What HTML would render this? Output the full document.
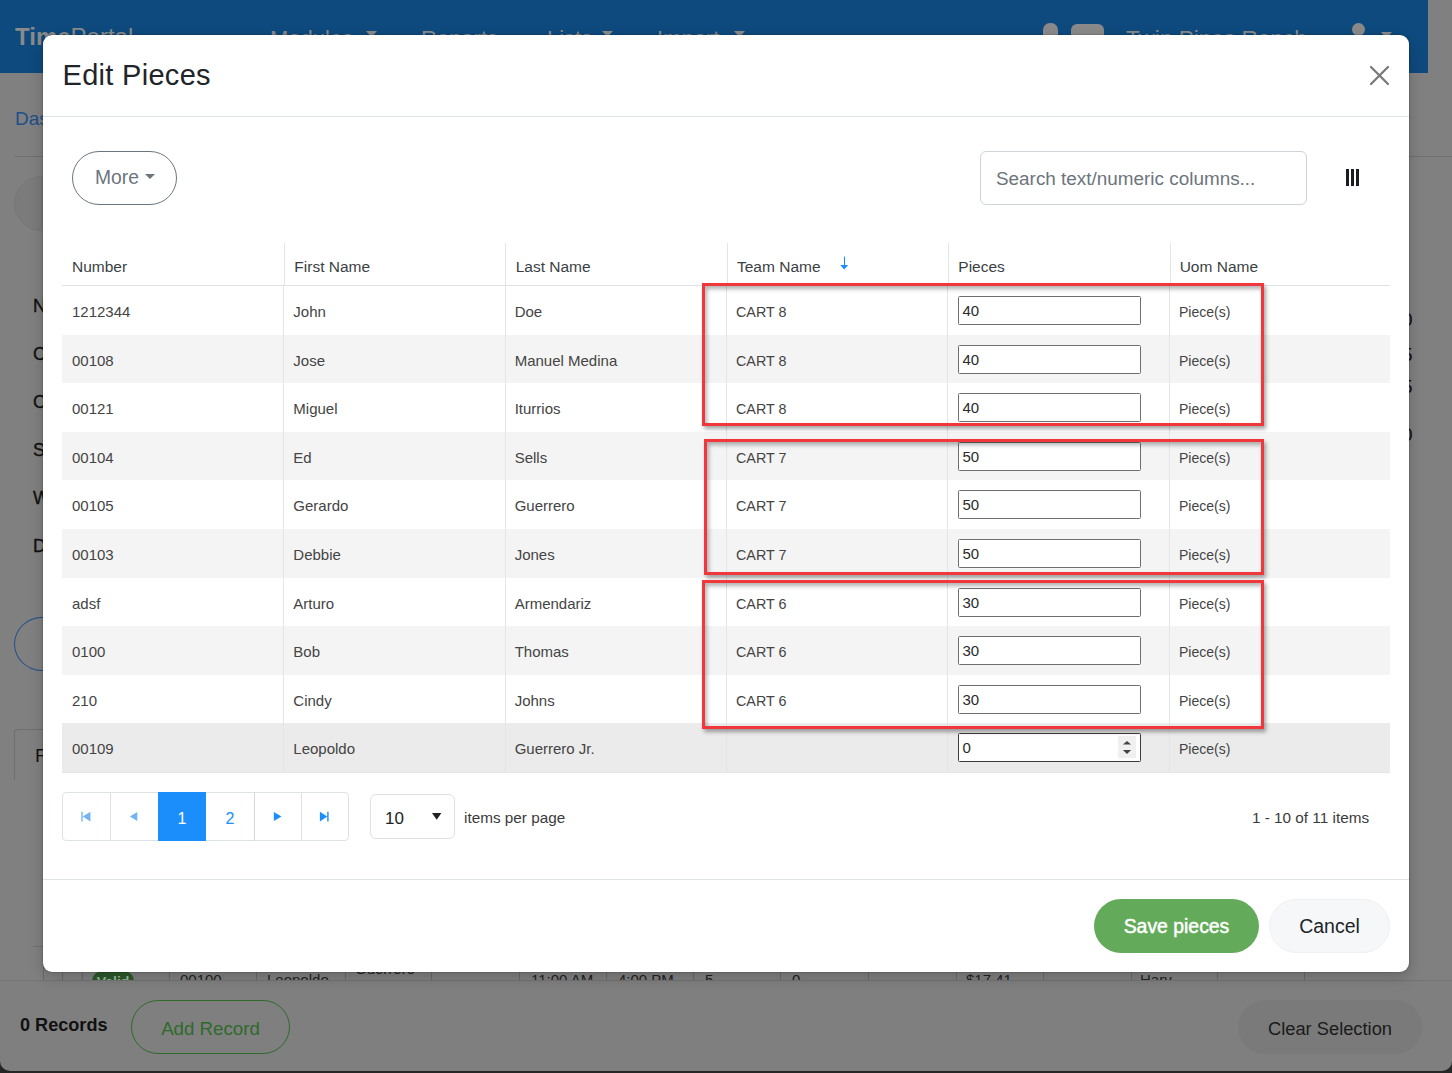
<!DOCTYPE html>
<html><head><meta charset="utf-8">
<style>
*{box-sizing:border-box;margin:0;padding:0}
html,body{width:1452px;height:1073px;overflow:hidden;background:#808080;font-family:"Liberation Sans",sans-serif;position:relative}
.abs{position:absolute}
#nav{left:0;top:0;width:1428px;height:73px;background:#0e4a7e}
.navt{color:#8a8a8a;font-size:22px;white-space:nowrap}
#bbar{left:0;top:980px;width:1452px;height:91px;background:#7f7f7f;border-top:1px solid #737373;border-radius:0 0 10px 10px}
#modal{left:43px;top:35px;width:1366px;height:937px;background:#fff;border-radius:9px;box-shadow:0 0 1.5px rgba(0,0,0,.55), 0 5px 15px rgba(0,0,0,.2)}
.rb{position:absolute;left:62px;width:1328px}
.vl{position:absolute;width:1px;background:#e3e5e8}
.th{position:absolute;top:255.5px;font-size:15.5px;color:#3b3f44;white-space:nowrap;line-height:22px}
.td{position:absolute;font-size:15px;color:#444;white-space:nowrap}
.inp{position:absolute;left:958px;width:183px;height:29px;border:1px solid #6e6e6e;border-radius:1.5px;background:#fff;font-size:15px;color:#2a2a2a;padding-left:3.5px;line-height:27.5px}
.spin{position:absolute;right:4px;top:2px;width:18px;height:22px;background:#f0f0f0}
.red{position:absolute;border:3px solid #f0373c;box-shadow:2px 3px 4px rgba(0,0,0,.35), inset 2px 3px 4px rgba(0,0,0,.3)}
.pg{position:absolute;top:792px;height:48px;border:1px solid #dee2e6}
</style></head><body>
<div id="nav" class="abs"></div>
<div class="abs navt" style="left:15px;top:25px;font-size:24px;line-height:24px;font-weight:bold">Time<span style="font-weight:normal">Portal</span></div>
<div class="abs navt" style="left:270px;top:26px">Modules</div>
<svg class="abs" style="left:365px;top:30px" width="13" height="8" viewBox="0 0 13 8"><path d="M1 1H12L6.5 7Z" fill="#8a8a8a"/></svg>
<div class="abs navt" style="left:421px;top:26px">Reports</div>
<div class="abs navt" style="left:547px;top:26px">Lists</div>
<svg class="abs" style="left:601px;top:30px" width="13" height="8" viewBox="0 0 13 8"><path d="M1 1H12L6.5 7Z" fill="#8a8a8a"/></svg>
<div class="abs navt" style="left:657px;top:26px">Import</div>
<svg class="abs" style="left:733px;top:30px" width="13" height="8" viewBox="0 0 13 8"><path d="M1 1H12L6.5 7Z" fill="#8a8a8a"/></svg>
<div class="abs" style="left:1043px;top:23px;width:15px;height:20px;border-radius:7px 7px 2px 2px;background:#8a8a8a"></div>
<div class="abs" style="left:1071px;top:24px;width:33px;height:20px;border-radius:6px;background:#8a8a8a"></div>
<div class="abs navt" style="left:1126px;top:26px;font-size:22.6px">Twin Pines Ranch</div>
<div class="abs" style="left:1352px;top:23px;width:13px;height:13px;border-radius:50%;background:#8a8a8a"></div>
<div class="abs" style="left:1348px;top:37px;width:21px;height:12px;border-radius:10px 10px 0 0;background:#8a8a8a"></div>
<svg class="abs" style="left:1380px;top:31px" width="13" height="8" viewBox="0 0 13 8"><path d="M1 1H12L6.5 7Z" fill="#8a8a8a"/></svg>
<div class="abs" style="left:15px;top:109px;font-size:19px;line-height:19px;color:#1d4f8a">Dashboard</div>
<div class="abs" style="left:14px;top:156px;width:60px;height:1px;background:#707070"></div>
<div class="abs" style="left:14px;top:176px;width:60px;height:55px;border-radius:28px;border:1px solid #777;background:#7b7b7b"></div>
<div class="abs" style="left:33px;top:297px;font-size:18px;line-height:18px;color:#111;-webkit-text-stroke:0.35px #111;white-space:nowrap">Name</div>
<div class="abs" style="left:33px;top:345px;font-size:18px;line-height:18px;color:#111;-webkit-text-stroke:0.35px #111">Code</div>
<div class="abs" style="left:33px;top:393px;font-size:18px;line-height:18px;color:#111;-webkit-text-stroke:0.35px #111">Crew</div>
<div class="abs" style="left:33px;top:441px;font-size:18px;line-height:18px;color:#111;-webkit-text-stroke:0.35px #111">Start</div>
<div class="abs" style="left:33px;top:489px;font-size:18px;line-height:18px;color:#111;-webkit-text-stroke:0.35px #111">Work</div>
<div class="abs" style="left:33px;top:537px;font-size:18px;line-height:18px;color:#111;-webkit-text-stroke:0.35px #111">Date</div>
<div class="abs" style="left:14px;top:617px;width:56px;height:54px;border-radius:50%;border:1px solid #1d4f8a"></div>
<div class="abs" style="left:14px;top:729px;width:100px;height:51px;border-radius:4px 4px 0 0;border:1px solid #6f6f6f;border-bottom:none"></div>
<div class="abs" style="left:35px;top:746px;font-size:19px;line-height:19px;color:#111">Rows</div>
<div class="abs" style="left:33px;top:946px;width:30px;height:1px;background:#707070"></div>
<div class="abs" style="left:1402px;top:310px;font-size:19px;line-height:19px;color:#111">0</div>
<div class="abs" style="left:1402px;top:345px;font-size:19px;line-height:19px;color:#111">5</div>
<div class="abs" style="left:1402px;top:377px;font-size:19px;line-height:19px;color:#111">5</div>
<div class="abs" style="left:1402px;top:425px;font-size:19px;line-height:19px;color:#111">0</div>
<div class="abs" style="left:1409px;top:156px;width:43px;height:1px;background:#707070"></div>

<div class="abs" style="left:43px;top:966px;width:1px;height:14px;background:#6a6a6a"></div>
<div class="abs" style="left:62px;top:966px;width:1px;height:14px;background:#6a6a6a"></div>
<div class="abs" style="left:82px;top:966px;width:1px;height:14px;background:#6a6a6a"></div>
<div class="abs" style="left:169px;top:966px;width:1px;height:14px;background:#6a6a6a"></div>
<div class="abs" style="left:256px;top:966px;width:1px;height:14px;background:#6a6a6a"></div>
<div class="abs" style="left:345px;top:966px;width:1px;height:14px;background:#6a6a6a"></div>
<div class="abs" style="left:431px;top:966px;width:1px;height:14px;background:#6a6a6a"></div>
<div class="abs" style="left:519px;top:966px;width:1px;height:14px;background:#6a6a6a"></div>
<div class="abs" style="left:606px;top:966px;width:1px;height:14px;background:#6a6a6a"></div>
<div class="abs" style="left:693px;top:966px;width:1px;height:14px;background:#6a6a6a"></div>
<div class="abs" style="left:780px;top:966px;width:1px;height:14px;background:#6a6a6a"></div>
<div class="abs" style="left:868px;top:966px;width:1px;height:14px;background:#6a6a6a"></div>
<div class="abs" style="left:956px;top:966px;width:1px;height:14px;background:#6a6a6a"></div>
<div class="abs" style="left:1043px;top:966px;width:1px;height:14px;background:#6a6a6a"></div>
<div class="abs" style="left:1131px;top:966px;width:1px;height:14px;background:#6a6a6a"></div>
<div class="abs" style="left:1217px;top:966px;width:1px;height:14px;background:#6a6a6a"></div>
<div class="abs" style="left:1304px;top:966px;width:1px;height:14px;background:#6a6a6a"></div>
<div class="abs" style="left:92px;top:971px;width:42px;height:20px;border-radius:10px;background:#2d5a2b;color:#9fb89e;font-size:14px;font-weight:bold;line-height:23px;text-align:center">Valid</div>
<div class="abs" style="left:180px;top:972px;font-size:15px;line-height:15px;color:#222;white-space:nowrap">00100</div>
<div class="abs" style="left:267px;top:972px;font-size:15px;line-height:15px;color:#222;white-space:nowrap">Leopoldo</div>
<div class="abs" style="left:355px;top:961px;font-size:15px;line-height:15px;color:#222;white-space:nowrap">Guerrero</div>
<div class="abs" style="left:531px;top:972px;font-size:15px;line-height:15px;color:#222;white-space:nowrap">11:00 AM</div>
<div class="abs" style="left:618px;top:972px;font-size:15px;line-height:15px;color:#222;white-space:nowrap">4:00 PM</div>
<div class="abs" style="left:705px;top:972px;font-size:15px;line-height:15px;color:#222;white-space:nowrap">5</div>
<div class="abs" style="left:792px;top:972px;font-size:15px;line-height:15px;color:#222;white-space:nowrap">0</div>
<div class="abs" style="left:966px;top:972px;font-size:15px;line-height:15px;color:#222;white-space:nowrap">$17.41</div>
<div class="abs" style="left:1140px;top:972px;font-size:15px;line-height:15px;color:#222;white-space:nowrap">Hary</div>

<div class="abs" style="left:0;top:1050px;width:1452px;height:23px;background:#262626"></div>
<div id="bbar" class="abs"></div>

<div class="abs" style="left:20px;top:1015.5px;font-size:18.1px;line-height:18px;font-weight:bold;color:#111">0 Records</div>
<div class="abs" style="left:131px;top:1000px;width:159px;height:54px;border:1px solid #2f6a2c;border-radius:27px;color:#2f6a2c;font-size:18.7px;text-align:center;line-height:55px">Add Record</div>
<div class="abs" style="left:1238px;top:1000px;width:184px;height:54px;border-radius:27px;background:#7a7a7a;color:#1a1a1a;font-size:18.3px;text-align:center;line-height:57px">Clear Selection</div>

<div id="modal" class="abs"></div>
<div class="abs" style="left:62.5px;top:58px;font-size:29px;letter-spacing:0.3px;color:#212529;white-space:nowrap;line-height:34px">Edit Pieces</div>
<svg class="abs" style="left:1368px;top:64px" width="24" height="24" viewBox="0 0 24 24"><path d="M3 3L20 20M20 3L3 20" stroke="#777" stroke-width="2.2" stroke-linecap="round"/></svg>
<div class="abs" style="left:43px;top:116px;width:1366px;height:1px;background:#dee2e6"></div>
<div class="abs" style="left:72px;top:151px;width:105px;height:54px;border:1px solid #6c757d;border-radius:27px;color:#6c757d;font-size:19.3px;line-height:52px;padding-left:22px">More<span style="display:inline-block;margin-left:6.5px;vertical-align:middle;width:0;height:0;border-left:5px solid transparent;border-right:5px solid transparent;border-top:5px solid #6c757d;position:relative;top:-2px"></span></div>
<div class="abs" style="left:980px;top:151px;width:327px;height:54px;border:1px solid #ced4da;border-radius:6px;color:#6c757d;font-size:18.9px;line-height:54px;padding-left:15px;white-space:nowrap">Search text/numeric columns...</div>
<div class="abs" style="left:1346px;top:169px;width:3px;height:17px;background:#1a1d21"></div>
<div class="abs" style="left:1351px;top:169px;width:3px;height:17px;background:#1a1d21"></div>
<div class="abs" style="left:1356px;top:169px;width:3px;height:17px;background:#1a1d21"></div>

<div class="rb" style="top:286.00px;height:48.60px;background:#fff"></div>
<div class="rb" style="top:334.60px;height:48.60px;background:#f4f4f4"></div>
<div class="rb" style="top:383.20px;height:48.60px;background:#fff"></div>
<div class="rb" style="top:431.80px;height:48.60px;background:#f4f4f4"></div>
<div class="rb" style="top:480.40px;height:48.60px;background:#fff"></div>
<div class="rb" style="top:529.00px;height:48.60px;background:#f4f4f4"></div>
<div class="rb" style="top:577.60px;height:48.60px;background:#fff"></div>
<div class="rb" style="top:626.20px;height:48.60px;background:#f4f4f4"></div>
<div class="rb" style="top:674.80px;height:48.60px;background:#fff"></div>
<div class="rb" style="top:723.40px;height:48.60px;background:#ebebeb"></div>
<div class="abs" style="left:62px;top:772.00px;width:1328px;height:1px;background:#e3e5e8"></div>
<div class="vl" style="left:283px;top:286.0px;height:486.00px"></div>
<div class="vl" style="left:505px;top:286.0px;height:486.00px"></div>
<div class="vl" style="left:726px;top:286.0px;height:486.00px"></div>
<div class="vl" style="left:947px;top:286.0px;height:486.00px"></div>
<div class="vl" style="left:1169px;top:286.0px;height:486.00px"></div>
<div class="vl" style="left:284px;top:243px;height:42px"></div>
<div class="vl" style="left:505px;top:243px;height:42px"></div>
<div class="vl" style="left:727px;top:243px;height:42px"></div>
<div class="vl" style="left:948px;top:243px;height:42px"></div>
<div class="vl" style="left:1170px;top:243px;height:42px"></div>
<div class="abs" style="left:62px;top:285px;width:1328px;height:1px;background:#dfe3e8"></div>
<div class="th" style="left:72.00px">Number</div>
<div class="th" style="left:294.33px">First Name</div>
<div class="th" style="left:515.67px">Last Name</div>
<div class="th" style="left:737.00px">Team Name</div>
<div class="th" style="left:958.33px">Pieces</div>
<div class="th" style="left:1179.67px">Uom Name</div>
<svg class="abs" style="left:838px;top:254px" width="12" height="18" viewBox="0 0 12 18"><path d="M6.5 2.6V11.5" stroke="#1a8cff" stroke-width="1.1"/><path d="M2.3 11.1H10.2L6.2 15.4Z" fill="#1a8cff"/></svg>
<div class="td" style="left:72.00px;top:288.00px;height:48.60px;line-height:48.60px">1212344</div>
<div class="td" style="left:293.33px;top:288.00px;height:48.60px;line-height:48.60px">John</div>
<div class="td" style="left:514.67px;top:288.00px;height:48.60px;line-height:48.60px">Doe</div>
<div class="td" style="left:736.00px;top:288.00px;height:48.60px;line-height:48.60px;transform:scaleX(0.955);transform-origin:0 0">CART 8</div>
<div class="td" style="left:1178.67px;top:288.00px;height:48.60px;line-height:48.60px;transform:scaleX(0.935);transform-origin:0 0">Piece(s)</div>
<div class="inp" style="top:296.00px">40</div>
<div class="td" style="left:72.00px;top:336.60px;height:48.60px;line-height:48.60px">00108</div>
<div class="td" style="left:293.33px;top:336.60px;height:48.60px;line-height:48.60px">Jose</div>
<div class="td" style="left:514.67px;top:336.60px;height:48.60px;line-height:48.60px">Manuel Medina</div>
<div class="td" style="left:736.00px;top:336.60px;height:48.60px;line-height:48.60px;transform:scaleX(0.955);transform-origin:0 0">CART 8</div>
<div class="td" style="left:1178.67px;top:336.60px;height:48.60px;line-height:48.60px;transform:scaleX(0.935);transform-origin:0 0">Piece(s)</div>
<div class="inp" style="top:344.60px">40</div>
<div class="td" style="left:72.00px;top:385.20px;height:48.60px;line-height:48.60px">00121</div>
<div class="td" style="left:293.33px;top:385.20px;height:48.60px;line-height:48.60px">Miguel</div>
<div class="td" style="left:514.67px;top:385.20px;height:48.60px;line-height:48.60px">Iturrios</div>
<div class="td" style="left:736.00px;top:385.20px;height:48.60px;line-height:48.60px;transform:scaleX(0.955);transform-origin:0 0">CART 8</div>
<div class="td" style="left:1178.67px;top:385.20px;height:48.60px;line-height:48.60px;transform:scaleX(0.935);transform-origin:0 0">Piece(s)</div>
<div class="inp" style="top:393.20px">40</div>
<div class="td" style="left:72.00px;top:433.80px;height:48.60px;line-height:48.60px">00104</div>
<div class="td" style="left:293.33px;top:433.80px;height:48.60px;line-height:48.60px">Ed</div>
<div class="td" style="left:514.67px;top:433.80px;height:48.60px;line-height:48.60px">Sells</div>
<div class="td" style="left:736.00px;top:433.80px;height:48.60px;line-height:48.60px;transform:scaleX(0.955);transform-origin:0 0">CART 7</div>
<div class="td" style="left:1178.67px;top:433.80px;height:48.60px;line-height:48.60px;transform:scaleX(0.935);transform-origin:0 0">Piece(s)</div>
<div class="inp" style="top:441.80px">50</div>
<div class="td" style="left:72.00px;top:482.40px;height:48.60px;line-height:48.60px">00105</div>
<div class="td" style="left:293.33px;top:482.40px;height:48.60px;line-height:48.60px">Gerardo</div>
<div class="td" style="left:514.67px;top:482.40px;height:48.60px;line-height:48.60px">Guerrero</div>
<div class="td" style="left:736.00px;top:482.40px;height:48.60px;line-height:48.60px;transform:scaleX(0.955);transform-origin:0 0">CART 7</div>
<div class="td" style="left:1178.67px;top:482.40px;height:48.60px;line-height:48.60px;transform:scaleX(0.935);transform-origin:0 0">Piece(s)</div>
<div class="inp" style="top:490.40px">50</div>
<div class="td" style="left:72.00px;top:531.00px;height:48.60px;line-height:48.60px">00103</div>
<div class="td" style="left:293.33px;top:531.00px;height:48.60px;line-height:48.60px">Debbie</div>
<div class="td" style="left:514.67px;top:531.00px;height:48.60px;line-height:48.60px">Jones</div>
<div class="td" style="left:736.00px;top:531.00px;height:48.60px;line-height:48.60px;transform:scaleX(0.955);transform-origin:0 0">CART 7</div>
<div class="td" style="left:1178.67px;top:531.00px;height:48.60px;line-height:48.60px;transform:scaleX(0.935);transform-origin:0 0">Piece(s)</div>
<div class="inp" style="top:539.00px">50</div>
<div class="td" style="left:72.00px;top:579.60px;height:48.60px;line-height:48.60px">adsf</div>
<div class="td" style="left:293.33px;top:579.60px;height:48.60px;line-height:48.60px">Arturo</div>
<div class="td" style="left:514.67px;top:579.60px;height:48.60px;line-height:48.60px">Armendariz</div>
<div class="td" style="left:736.00px;top:579.60px;height:48.60px;line-height:48.60px;transform:scaleX(0.955);transform-origin:0 0">CART 6</div>
<div class="td" style="left:1178.67px;top:579.60px;height:48.60px;line-height:48.60px;transform:scaleX(0.935);transform-origin:0 0">Piece(s)</div>
<div class="inp" style="top:587.60px">30</div>
<div class="td" style="left:72.00px;top:628.20px;height:48.60px;line-height:48.60px">0100</div>
<div class="td" style="left:293.33px;top:628.20px;height:48.60px;line-height:48.60px">Bob</div>
<div class="td" style="left:514.67px;top:628.20px;height:48.60px;line-height:48.60px">Thomas</div>
<div class="td" style="left:736.00px;top:628.20px;height:48.60px;line-height:48.60px;transform:scaleX(0.955);transform-origin:0 0">CART 6</div>
<div class="td" style="left:1178.67px;top:628.20px;height:48.60px;line-height:48.60px;transform:scaleX(0.935);transform-origin:0 0">Piece(s)</div>
<div class="inp" style="top:636.20px">30</div>
<div class="td" style="left:72.00px;top:676.80px;height:48.60px;line-height:48.60px">210</div>
<div class="td" style="left:293.33px;top:676.80px;height:48.60px;line-height:48.60px">Cindy</div>
<div class="td" style="left:514.67px;top:676.80px;height:48.60px;line-height:48.60px">Johns</div>
<div class="td" style="left:736.00px;top:676.80px;height:48.60px;line-height:48.60px;transform:scaleX(0.955);transform-origin:0 0">CART 6</div>
<div class="td" style="left:1178.67px;top:676.80px;height:48.60px;line-height:48.60px;transform:scaleX(0.935);transform-origin:0 0">Piece(s)</div>
<div class="inp" style="top:684.80px">30</div>
<div class="td" style="left:72.00px;top:725.40px;height:48.60px;line-height:48.60px">00109</div>
<div class="td" style="left:293.33px;top:725.40px;height:48.60px;line-height:48.60px">Leopoldo</div>
<div class="td" style="left:514.67px;top:725.40px;height:48.60px;line-height:48.60px">Guerrero Jr.</div>
<div class="td" style="left:1178.67px;top:725.40px;height:48.60px;line-height:48.60px;transform:scaleX(0.935);transform-origin:0 0">Piece(s)</div>
<div class="inp" style="top:733.40px;border-color:#3c3c3c">0<div class="spin"><svg width="18" height="22" viewBox="0 0 18 22"><path d="M4.9 8.5L9 5 13.1 8.5Z M4.9 14H13.1L9 18.1Z" fill="#444"/></svg></div></div>

<div class="red" style="left:702px;top:283px;width:562px;height:143px"></div>
<div class="red" style="left:704px;top:439px;width:560px;height:135.5px"></div>
<div class="red" style="left:702px;top:580px;width:562px;height:148.5px"></div>

<div class="abs" style="left:62px;top:792px;width:287px;height:49px;border:1px solid #dee2e6;border-radius:4px"></div>
<div class="abs" style="left:110px;top:792px;width:1px;height:49px;background:#dee2e6"></div>
<div class="abs" style="left:158px;top:792px;width:48px;height:49px;background:#1c8efc"></div>
<div class="abs" style="left:254px;top:792px;width:1px;height:49px;background:#d6dadf"></div>
<div class="abs" style="left:301px;top:792px;width:1px;height:49px;background:#dee2e6"></div>
<svg class="abs" style="left:80px;top:810px" width="14" height="14" viewBox="0 0 14 14"><path d="M1.3 1.8H2.7V11.5H1.3Z M2.7 6.6L10.4 1.8V11.5Z" fill="#73b4f4"/></svg>
<svg class="abs" style="left:128px;top:810px" width="14" height="14" viewBox="0 0 14 14"><path d="M1.8 6.6L9.3 2V11Z" fill="#73b4f4"/></svg>
<div class="abs" style="left:158px;top:808px;width:48px;text-align:center;font-size:16px;color:#fff;line-height:22px">1</div>
<div class="abs" style="left:206px;top:808px;width:48px;text-align:center;font-size:16px;color:#1c8efc;line-height:22px">2</div>
<svg class="abs" style="left:272px;top:810px" width="14" height="14" viewBox="0 0 14 14"><path d="M1.8 2V11L9.5 6.6Z" fill="#1c8efc"/></svg>
<svg class="abs" style="left:318px;top:810px" width="14" height="14" viewBox="0 0 14 14"><path d="M1.9 1.8V11.5L9.2 6.6Z M9.2 1.8H10.6V11.5H9.2Z" fill="#1c8efc"/></svg>

<div class="abs" style="left:370px;top:794px;width:85px;height:45px;border:1px solid #dde1e6;border-radius:6px"></div>
<div class="abs" style="left:385px;top:807px;font-size:17px;color:#222;line-height:24px">10</div>
<svg class="abs" style="left:430px;top:811px" width="14" height="10" viewBox="0 0 14 10"><path d="M2 2H11.4L6.7 8.7Z" fill="#222"/></svg>
<div class="abs" style="left:464px;top:807px;font-size:15.3px;color:#3b3b3b;line-height:22px;white-space:nowrap">items per page</div>
<div class="abs" style="left:1252px;top:807px;font-size:15.3px;color:#3b3b3b;line-height:22px;white-space:nowrap">1 - 10 of 11 items</div>

<div class="abs" style="left:43px;top:879px;width:1366px;height:1px;background:#dee2e6"></div>
<div class="abs" style="left:1094px;top:899px;width:165px;height:54px;border-radius:27px;background:#63ab5b;color:#fff;font-size:19.4px;-webkit-text-stroke:0.45px #fff;text-align:center;line-height:54px">Save pieces</div>
<div class="abs" style="left:1269px;top:899px;width:121px;height:54px;border-radius:27px;background:#f6f7f8;border:1px solid #eef0f2;color:#212529;font-size:19.5px;text-align:center;line-height:52px">Cancel</div>
</body></html>
